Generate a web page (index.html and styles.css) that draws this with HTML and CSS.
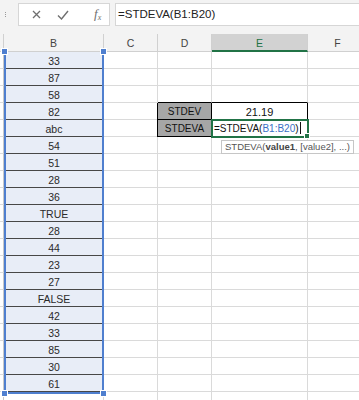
FILE: index.html
```html
<!DOCTYPE html>
<html lang="en">
<head>
    <meta charset="UTF-8">
    <meta name="viewport" content="width=device-width, initial-scale=1.0">
    <title>STDEVA</title>
    <link rel="stylesheet" href="styles.css">
</head>
<body>
    <div class="fbar">
        <span class="grip"></span>
        <div class="fbtns">
            <svg class="ic-x" width="9" height="9" viewBox="0 0 9 9"><path d="M1 1 L8 8 M8 1 L1 8" stroke="#6f6f6f" stroke-width="1.3" fill="none"/></svg>
            <svg class="ic-ok" width="12" height="10" viewBox="0 0 12 10"><path d="M1 5.5 L4.5 9 L11 1" stroke="#6f6f6f" stroke-width="1.4" fill="none"/></svg>
            <span class="fx">f<sub>x</sub></span>
        </div>
        <div class="finput">=STDEVA(B1:B20)</div>
    </div>

    <div class="sheet">
        <div class="col col-a">
            <div class="hd"></div>
            <div class="c"></div><div class="c"></div><div class="c"></div><div class="c"></div><div class="c"></div>
            <div class="c"></div><div class="c"></div><div class="c"></div><div class="c"></div><div class="c"></div>
            <div class="c"></div><div class="c"></div><div class="c"></div><div class="c"></div><div class="c"></div>
            <div class="c"></div><div class="c"></div><div class="c"></div><div class="c"></div><div class="c"></div>
            <div class="c"></div>
        </div>

        <div class="col col-b">
            <div class="hd">B</div>
            <div class="sel">
                <i class="hdl tl"></i><i class="hdl tr"></i><i class="hdl bl"></i><i class="hdl br"></i>
                <div class="c">33</div>
                <div class="c">87</div>
                <div class="c">58</div>
                <div class="c">82</div>
                <div class="c">abc</div>
                <div class="c">54</div>
                <div class="c">51</div>
                <div class="c">28</div>
                <div class="c">36</div>
                <div class="c">TRUE</div>
                <div class="c">28</div>
                <div class="c">44</div>
                <div class="c">23</div>
                <div class="c">27</div>
                <div class="c">FALSE</div>
                <div class="c">42</div>
                <div class="c">33</div>
                <div class="c">85</div>
                <div class="c">30</div>
                <div class="c">61</div>
            </div>
            <div class="c"></div>
        </div>

        <div class="col col-c">
            <div class="hd">C</div>
            <div class="c"></div><div class="c"></div><div class="c"></div><div class="c"></div><div class="c"></div>
            <div class="c"></div><div class="c"></div><div class="c"></div><div class="c"></div><div class="c"></div>
            <div class="c"></div><div class="c"></div><div class="c"></div><div class="c"></div><div class="c"></div>
            <div class="c"></div><div class="c"></div><div class="c"></div><div class="c"></div><div class="c"></div>
            <div class="c"></div>
        </div>

        <div class="col col-d">
            <div class="hd">D</div>
            <div class="c"></div><div class="c"></div><div class="c pre"></div>
            <div class="c lbl">STDEV</div>
            <div class="c lbl">STDEVA</div>
            <div class="c"></div><div class="c"></div><div class="c"></div><div class="c"></div><div class="c"></div>
            <div class="c"></div><div class="c"></div><div class="c"></div><div class="c"></div><div class="c"></div>
            <div class="c"></div><div class="c"></div><div class="c"></div><div class="c"></div><div class="c"></div>
            <div class="c"></div>
        </div>

        <div class="col col-e">
            <div class="hd active">E</div>
            <div class="c"></div><div class="c"></div><div class="c pre"></div>
            <div class="c val">21.19</div>
            <div class="c edit">
                =STDEVA(<span class="ref">B1:B20</span>)<span class="caret"></span>
                <div class="tip">STDEVA(<b>value1</b>, [value2], ...)</div>
            </div>
            <div class="c"></div><div class="c"></div><div class="c"></div><div class="c"></div><div class="c"></div>
            <div class="c"></div><div class="c"></div><div class="c"></div><div class="c"></div><div class="c"></div>
            <div class="c"></div><div class="c"></div><div class="c"></div><div class="c"></div><div class="c"></div>
            <div class="c"></div>
        </div>

        <div class="col col-f">
            <div class="hd">F</div>
            <div class="c"></div><div class="c"></div><div class="c"></div><div class="c"></div><div class="c"></div>
            <div class="c"></div><div class="c"></div><div class="c"></div><div class="c"></div><div class="c"></div>
            <div class="c"></div><div class="c"></div><div class="c"></div><div class="c"></div><div class="c"></div>
            <div class="c"></div><div class="c"></div><div class="c"></div><div class="c"></div><div class="c"></div>
            <div class="c"></div>
        </div>
    </div>
</body>
</html>
```

FILE: styles.css
```css
body {
    margin: 0;
    width: 359px;
    height: 400px;
    overflow: hidden;
    background-color: #fff;
    font-family: 'Liberation Sans', Arial, sans-serif;
    color: #222;
}
.fbar {
    display: flex;
    align-items: flex-start;
    height: 34px;
    box-sizing: border-box;
    padding-top: 3px;
    background-color: #f3f3f3;
}
.grip {
    width: 1px;
    height: 6px;
    margin: 9px 0 0 5px;
    background: repeating-linear-gradient(to bottom, #9a9a9a 0 1px, transparent 1px 2px);
}
.fbtns {
    display: flex;
    align-items: center;
    width: 92px;
    height: 23px;
    margin-left: 12px;
    box-sizing: border-box;
    background-color: #fff;
    border: 1px solid #d6d6d6;
}
.ic-x {
    margin-left: 13px;
}
.ic-ok {
    margin-left: 16px;
}
.fx {
    margin-left: 25px;
    font-family: 'Liberation Serif', serif;
    font-style: italic;
    font-size: 13px;
    color: #6f6f6f;
    line-height: 1;
}
.fx sub {
    font-size: 8px;
    vertical-align: -2px;
}
.finput {
    flex: 1;
    height: 23px;
    margin-left: 5px;
    margin-right: -2px;
    box-sizing: border-box;
    padding-left: 2px;
    background-color: #fff;
    border: 1px solid #d6d6d6;
    font-size: 11.5px;
    line-height: 21px;
    color: #222;
}

.sheet {
    display: flex;
    font-size: 10.5px;
}
.col {
    flex: none;
}
.col-a { width: 4px; }
.col-b { width: 100px; }
.col-c { width: 54px; }
.col-d { width: 54px; }
.col-e { width: 96px; }
.col-f { width: 60px; }

.hd {
    height: 18px;
    box-sizing: border-box;
    border-right: 1px solid #d0d0d0;
    border-bottom: 1px solid #d0d0d0;
    background-color: #f3f3f3;
    color: #444;
    text-align: center;
    line-height: 18px;
}
.hd.active {
    background-color: #d2d2d2;
    color: #217346;
    border-bottom: 2px solid #217346;
}
.c {
    height: 17px;
    box-sizing: border-box;
    border-right: 1px solid #dadada;
    border-bottom: 1px solid #dadada;
    text-align: center;
    line-height: 18px;
    white-space: nowrap;
}
.col-a .c {
    border-right: 1px solid #c8c8c8;
}

.sel {
    position: relative;
    border-left: 2px solid #4f7fcf;
    border-right: 2px solid #4f7fcf;
    border-bottom: 2px solid #4f7fcf;
}
.sel .c {
    background-color: #e8edf7;
    border-right: none;
    border-bottom: 1px solid #474747;
    color: #2a2a2a;
}
.hdl {
    position: absolute;
    width: 5px;
    height: 5px;
    background-color: #4f7fcf;
    border: 1px solid #fff;
}
.hdl.tl { top: -4px; left: -5px; }
.hdl.tr { top: -4px; right: -5px; }
.hdl.bl { bottom: -5px; left: -5px; }
.hdl.br { bottom: -5px; right: -5px; }

.pre {
    border-bottom-color: #000;
}
.lbl {
    background-color: #a6a6a6;
    border-right-color: #000;
    border-bottom-color: #000;
    box-shadow: -1px 0 0 #000;
    color: #111;
    font-size: 10px;
}
.val {
    border-right-color: #000;
    border-bottom-color: #000;
    color: #111;
    font-size: 11px;
}
.edit {
    position: relative;
    text-align: left;
    padding-left: 2px;
    color: #111;
    font-size: 10px;
    outline: 2px solid #217346;
    outline-offset: -1px;
}
.edit .ref {
    color: #3a6fc6;
}
.caret {
    display: inline-block;
    width: 1px;
    height: 12px;
    margin-left: 1px;
    vertical-align: -2px;
    background-color: #111;
}
.edit::after {
    content: '';
    position: absolute;
    right: -3px;
    bottom: -3px;
    width: 4px;
    height: 4px;
    background-color: #217346;
    border: 1px solid #fff;
}
.tip {
    position: absolute;
    top: 20px;
    left: 9px;
    padding: 0 3px;
    background-color: #fff;
    border: 1px solid #c6c6c6;
    color: #555;
    font-size: 9.5px;
    line-height: 12px;
    white-space: nowrap;
}
.tip b {
    color: #444;
}
```
